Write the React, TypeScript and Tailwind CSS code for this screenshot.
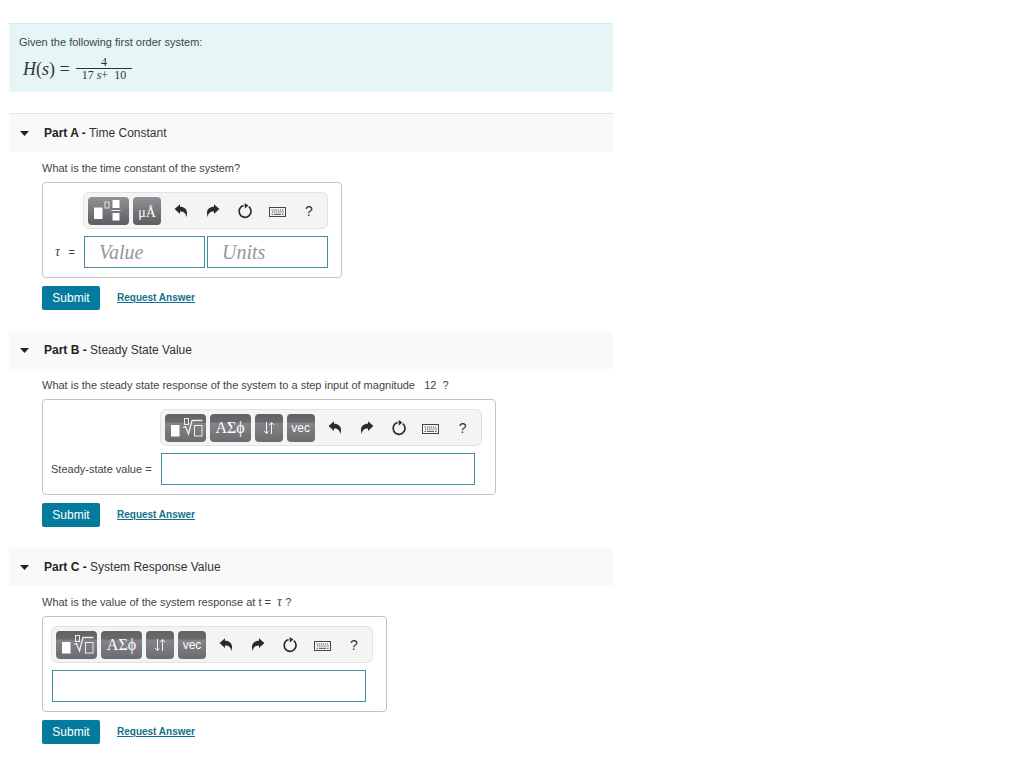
import React from 'react';

type ToolbarKind = 'units' | 'math';

const IconUndo = ({ className = '' }: { className?: string }) => (
  <svg className={className} width="14" height="14" viewBox="0 0 14 14" fill="#2b2b2b" aria-hidden="true">
    <path d="M0.6 5 L6 0.2 V2.8 C11.6 2.8 14.6 6.8 12.2 13.2 C12 9.6 10 7.6 6 7.6 V10 Z" />
  </svg>
);

const IconReset = () => (
  <svg width="16" height="16" viewBox="0 0 16 16" fill="none" aria-hidden="true">
    <path d="M11.8 3.6 A6 6 0 1 1 6.6 2.5" stroke="#2b2b2b" strokeWidth="1.7" />
    <path d="M7.6 0 L11.4 2.6 L7.8 5.4 Z" fill="#2b2b2b" />
  </svg>
);

const IconKeyboard = () => (
  <svg width="17" height="14" viewBox="0 0 17 14" fill="none" aria-hidden="true">
    <rect x="0.5" y="3.5" width="16" height="9" fill="#fafafa" stroke="#444" />
    <path d="M2.5 6 H15" stroke="#444" strokeDasharray="1.2 0.9" />
    <path d="M3 8 H15" stroke="#444" strokeDasharray="1.2 0.9" />
    <path d="M2.5 10.3 H4 M5 10.3 H12 M13 10.3 H14.6" stroke="#444" />
  </svg>
);

const IconTemplates = () => (
  <svg width="41" height="28" viewBox="0 0 41 28" fill="none" aria-hidden="true">
    <rect x="6" y="10.5" width="8.5" height="11.5" fill="#fff" />
    <rect x="17" y="5" width="4" height="6" stroke="#e8e8e8" />
    <rect x="24.5" y="3" width="7" height="8" fill="#fff" />
    <path d="M23.5 13.5 H32.5" stroke="#e8e8e8" />
    <rect x="24.5" y="16" width="7" height="7.5" fill="#fff" />
  </svg>
);

const IconRoot = () => (
  <svg width="41" height="28" viewBox="0 0 41 28" fill="none" aria-hidden="true">
    <rect x="6" y="11" width="8.5" height="11.5" fill="#fff" />
    <rect x="19.5" y="4.5" width="4" height="6" stroke="#eee" />
    <path d="M18 13.5 L20.5 12.5 L23.5 20 L27 6.5 H37.5" stroke="#eee" strokeWidth="1.3" />
    <rect x="29.5" y="11.5" width="7.5" height="10.5" stroke="#eee" />
  </svg>
);

const IconArrows = () => (
  <svg width="14" height="14" viewBox="0 0 14 14" fill="none" stroke="#f2f2f2" aria-hidden="true">
    <path d="M4.5 1 V12.5 M1.8 9.8 L4.5 12.6 L6.4 10.4" />
    <path d="M9.5 13 V1.5 M7.3 4.2 L9.5 1.4 L12.2 4.2" />
  </svg>
);

const solid = 'h-7 flex items-center justify-center rounded text-white shrink-0';
const smooth = 'bg-linear-to-b from-[#919196] to-[#5e5e62]';
const banded = 'bg-[linear-gradient(to_bottom,#626265_0,#6a6a6d_30%,#858589_31%,#6c6c70_100%)]';
const plain = 'w-8 h-7 flex items-center justify-center';

const Toolbar = ({ kind }: { kind: ToolbarKind }) => (
  <div className="flex items-center gap-1 h-[37px] pl-1 pr-0.5 rounded-md border border-[#e2e2e2] bg-[#f4f4f4]">
    {kind === 'units' ? (
      <>
        <button type="button" aria-label="Templates" className={`${solid} ${smooth} w-[41px]`}>
          <IconTemplates />
        </button>
        <button
          type="button"
          className={`${solid} ${smooth} w-7 pt-1 font-['Liberation_Serif',serif] text-sm leading-4`}
        >
          μÅ
        </button>
      </>
    ) : (
      <>
        <button type="button" aria-label="Templates" className={`${solid} ${banded} w-[41px]`}>
          <IconRoot />
        </button>
        <button
          type="button"
          className={`${solid} ${banded} w-[41px] font-['Liberation_Serif',serif] text-base leading-4`}
        >
          ΑΣϕ
        </button>
        <button type="button" aria-label="Subscripts" className={`${solid} ${banded} w-7`}>
          <IconArrows />
        </button>
        <button type="button" className={`${solid} ${banded} w-7 text-xs`}>
          vec
        </button>
      </>
    )}
    <div className="flex">
      <button type="button" aria-label="Undo" className={plain}>
        <IconUndo />
      </button>
      <button type="button" aria-label="Redo" className={plain}>
        <IconUndo className="-scale-x-100" />
      </button>
      <button type="button" aria-label="Reset" className={plain}>
        <IconReset />
      </button>
      <button type="button" aria-label="Keyboard" className={plain}>
        <IconKeyboard />
      </button>
      <button type="button" className={`${plain} text-sm text-[#333]`}>
        ?
      </button>
    </div>
  </div>
);

const field =
  "h-8 min-w-0 border border-[#3f8f9d] bg-white font-['Liberation_Serif',serif] text-xl placeholder:italic placeholder:text-[#969696] outline-none";

type PartProps = {
  letter: string;
  title: string;
  question: React.ReactNode;
  first?: boolean;
  label?: React.ReactNode;
  kind: ToolbarKind;
};

const Part = ({ letter, title, question, first, label, kind }: PartProps) => {
  const id = `answer-${letter}`;

  return (
    <section className="mb-[21px]">
      <h2
        className={`flex items-center bg-[#f9f9f9] text-xs text-[#333] ${
          first ? 'h-[39px] border-t border-[#e3e3e3]' : 'h-[38px]'
        }`}
      >
        <button type="button" aria-label={`Toggle part ${letter}`} className="w-[35px] pl-[11px]">
          <svg width="9" height="5" viewBox="0 0 9 5" fill="#222" aria-hidden="true">
            <path d="M0 0 H9 L4.5 5 Z" />
          </svg>
        </button>
        <span>
          <b className="text-[#222]">Part {letter} -</b> {title}
        </span>
      </h2>

      <div className="pl-[33px]">
        <p className="h-[30px] py-2 text-[11px] leading-4 whitespace-pre-wrap">{question}</p>

        <div className="w-fit flex items-end py-[9px] pl-2 pr-[13px] rounded border border-[#c4c4c4]">
          {label && (
            <label htmlFor={id} className="h-8 flex items-center pr-2 text-[11px]">
              {label}
            </label>
          )}
          <div className="flex flex-col gap-[7px]">
            <Toolbar kind={kind} />
            {kind === 'units' ? (
              <div className="flex gap-0.5 pl-px">
                <input id={id} placeholder="Value" className={`${field} w-[121px] px-3.5`} />
                <input aria-label="Units" placeholder="Units" className={`${field} w-[121px] px-3.5`} />
              </div>
            ) : (
              <div className="pl-px pr-[7px]">
                <input id={id} aria-label={label ? undefined : title} className={`${field} w-full px-2`} />
              </div>
            )}
          </div>
        </div>

        <div className="flex items-center gap-[17px] mt-2">
          <button type="button" className="h-6 w-[58px] rounded-xs bg-[#047a9c] text-xs text-white">
            Submit
          </button>
          <a href="#" className="text-[10px] leading-4 font-bold text-[#14708a] underline">
            Request Answer
          </a>
        </div>
      </div>
    </section>
  );
};

const Tau = () => <i className="font-['Liberation_Serif',serif] text-sm leading-4">τ</i>;

const App = () => {
  return (
    <main className="max-w-[622px] px-[9px] pt-[23px] font-['Liberation_Sans',Arial,sans-serif] text-[#444]">
      <section className="h-[69px] mb-[21px] pl-2.5 pt-2.5 border-t border-[#dbe6e6] bg-[#e6f6f7]">
        <p className="text-[11px] leading-4">Given the following first order system:</p>
        <div className="flex items-center gap-1.5 pl-1 pt-1.5 font-['Liberation_Serif',serif] text-[#333]">
          <span className="text-lg leading-6">
            <i>H</i>(<i>s</i>) =
          </span>
          <span className="flex flex-col items-center text-xs leading-3">
            <span>4</span>
            <span className="px-1.5 border-t border-[#333] whitespace-pre">
              17 <i>s</i>+{'  '}10
            </span>
          </span>
        </div>
      </section>

      <Part
        first
        letter="A"
        title="Time Constant"
        question="What is the time constant of the system?"
        kind="units"
        label={
          <span className="w-6 flex items-center justify-between pl-1">
            <Tau /> =
          </span>
        }
      />
      <Part
        letter="B"
        title="Steady State Value"
        question={'What is the steady state response of the system to a step input of magnitude   12  ?'}
        kind="math"
        label="Steady-state value ="
      />
      <Part
        letter="C"
        title="System Response Value"
        question={
          <>
            What is the value of the system response at t ={'  '}
            <Tau /> ?
          </>
        }
        kind="math"
      />
    </main>
  );
};

export default App;
